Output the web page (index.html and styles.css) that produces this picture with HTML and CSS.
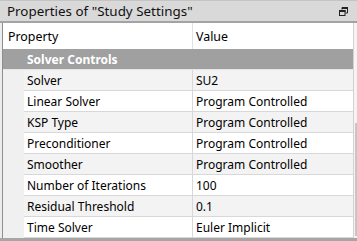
FILE: index.html
```html
<!DOCTYPE html>
<html lang="en">
<head>
    <meta charset="UTF-8">
    <title>Properties of "Study Settings"</title>
    <link rel="stylesheet" href="styles.css">
</head>
<body>
    <div class="panel">
        <div class="titlebar">
            <span class="title">Properties of "Study Settings"</span>
            <svg class="restore" width="9" height="9" viewBox="0 0 9 9">
                <path d="M3 0.5h5.5v5.5h-2M3 0.5v2" fill="none" stroke="#222" stroke-width="1"/>
                <rect x="3" y="0" width="6" height="2" fill="#222"/>
                <rect x="0.5" y="3.5" width="5.5" height="5" fill="none" stroke="#222" stroke-width="1"/>
                <rect x="0" y="3" width="6.5" height="2" fill="#222"/>
            </svg>
        </div>
        <div class="body">
            <div class="grid">
                <div class="row header">
                    <div class="cell name">Property</div>
                    <div class="cell value">Value</div>
                </div>
                <div class="row category">Solver Controls</div>
                <div class="row alt">
                    <div class="indent"></div>
                    <div class="cell name">Solver</div>
                    <div class="cell value">SU2</div>
                </div>
                <div class="row">
                    <div class="indent"></div>
                    <div class="cell name">Linear Solver</div>
                    <div class="cell value">Program Controlled</div>
                </div>
                <div class="row alt">
                    <div class="indent"></div>
                    <div class="cell name">KSP Type</div>
                    <div class="cell value">Program Controlled</div>
                </div>
                <div class="row">
                    <div class="indent"></div>
                    <div class="cell name">Preconditioner</div>
                    <div class="cell value">Program Controlled</div>
                </div>
                <div class="row alt">
                    <div class="indent"></div>
                    <div class="cell name">Smoother</div>
                    <div class="cell value">Program Controlled</div>
                </div>
                <div class="row">
                    <div class="indent"></div>
                    <div class="cell name">Number of Iterations</div>
                    <div class="cell value">100</div>
                </div>
                <div class="row alt">
                    <div class="indent"></div>
                    <div class="cell name">Residual Threshold</div>
                    <div class="cell value">0.1</div>
                </div>
                <div class="row">
                    <div class="indent"></div>
                    <div class="cell name">Time Solver</div>
                    <div class="cell value">Euler Implicit</div>
                </div>
            </div>
            <div class="scrollbar"><div class="thumb"></div></div>
        </div>
        <div class="bottom"></div>
    </div>
</body>
</html>
```

FILE: styles.css
```css
body {
    margin: 0;
    font-family: "Noto Sans", "Open Sans", sans-serif;
    font-size: 12px;
    color: #000;
    background: #ececec;
    width: 357px;
    height: 241px;
    overflow: hidden;
}

.panel {
    display: flex;
    flex-direction: column;
    height: 241px;
}

.titlebar {
    height: 21px;
    background: #d9d9d9;
    border-top: 1px solid #c4c4c4;
    border-bottom: 2px solid #a3a3a3;
    display: flex;
    align-items: center;
    justify-content: space-between;
    padding: 0 9px 0 7px;
}

.title {
    font-size: 13.4px;
    color: #111;
}

.body {
    display: flex;
    margin-left: 2px;
    border-left: 1px solid #8e8e8e;
    flex: 1;
    background: #fff;
}

.grid {
    width: 350px;
    border-right: 1px solid #d2d2d2;
}

.row {
    display: flex;
    height: 21px;
}

.row.alt .cell {
    background: #f3f3f3;
}

.indent {
    width: 21px;
    background: #f0f0f0;
}

.cell {
    display: flex;
    align-items: center;
    border-bottom: 1px solid #d8d8d8;
    white-space: nowrap;
}

.cell.name {
    width: 165px;
    padding-left: 3px;
    border-right: 1px solid #d8d8d8;
}

.cell.value {
    flex: 1;
    padding-left: 3px;
}

.header {
    height: 26px;
}

.header .cell {
    border-bottom: none;
    font-size: 12.4px;
}

.header .cell.name {
    width: 184px;
    padding-left: 5px;
    border-right-color: #e2e2e2;
}

.category {
    height: 20px;
    background: #a0a0a0;
    color: #fff;
    font-weight: bold;
    align-items: center;
    padding-left: 24px;
    border-bottom: 1px solid #e6e6e6;
}

.scrollbar {
    flex: 1;
    background: #f4f4f4;
    padding: 100px 0 0 1px;
}

.thumb {
    height: 113px;
    background: #c6c6c6;
}

.bottom {
    height: 3px;
    background: #a6a6a6;
}
```
